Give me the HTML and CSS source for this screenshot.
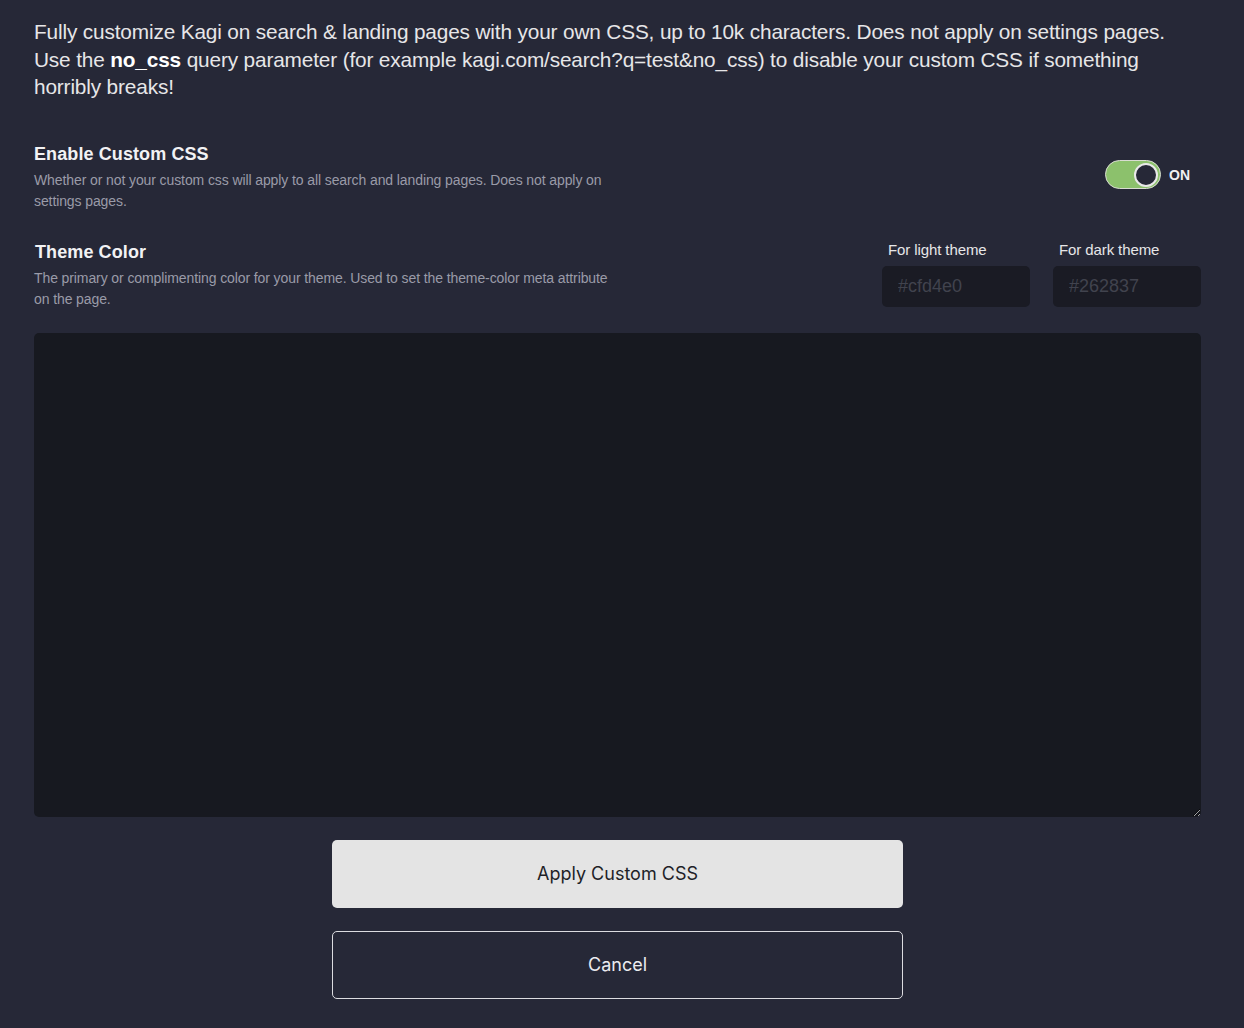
FILE: index.html
```html
<!DOCTYPE html>
<html lang="en">
<head>
    <meta charset="UTF-8">
    <meta name="viewport" content="width=device-width, initial-scale=1.0">
    <title>Custom CSS</title>
    <link rel="stylesheet" href="styles.css">
</head>
<body>
    <main class="page">
        <p class="intro">
            Fully customize Kagi on search &amp; landing pages with your own CSS, up to 10k characters. Does not apply on settings pages.<br>
            Use the <b>no_css</b> query parameter (for example kagi.com/search?q=test&amp;no_css) to disable your custom CSS if something horribly breaks!
        </p>

        <div class="setting">
            <div class="setting-text">
                <h3>Enable Custom CSS</h3>
                <p>Whether or not your custom css will apply to all search and landing pages. Does not apply on settings pages.</p>
            </div>
            <label class="switch">
                <span class="track"><span class="knob"></span></span>
                <span class="switch-label">ON</span>
            </label>
        </div>

        <div class="setting theme">
            <div class="setting-text">
                <h3>Theme Color</h3>
                <p>The primary or complimenting color for your theme. Used to set the theme-color meta attribute on the page.</p>
            </div>
            <div class="colors">
                <label class="color-field">
                    <span>For light theme</span>
                    <input type="text" placeholder="#cfd4e0">
                </label>
                <label class="color-field">
                    <span>For dark theme</span>
                    <input type="text" placeholder="#262837">
                </label>
            </div>
        </div>

        <textarea class="editor"></textarea>

        <div class="actions">
            <button class="btn primary">Apply Custom CSS</button>
            <button class="btn outline">Cancel</button>
        </div>
    </main>
</body>
</html>
```

FILE: styles.css
```css
*, *:before, *:after{
    margin: 0;
    padding: 0;
    box-sizing: border-box;
}
body{
    background: #262837;
    font-family: "Liberation Sans", Arial, sans-serif;
    color: #e8e8ea;
}
.page{
    width: 1167px;
    margin-left: 34px;
    padding-top: 18px;
}
.intro{
    font-size: 20.8px;
    line-height: 27.5px;
    color: #e6e6e8;
    letter-spacing: -0.15px;
}
.intro b{
    color: #fff;
}
.setting{
    display: flex;
    justify-content: space-between;
    margin-top: 42px;
}
.setting-text{
    width: 580px;
}
.setting h3{
    font-size: 18px;
    font-weight: bold;
    color: #f2f2f4;
    line-height: 22px;
    letter-spacing: 0.1px;
}
.setting p{
    font-size: 14px;
    line-height: 21px;
    color: #9a9ba8;
    margin-top: 5px;
    letter-spacing: -0.1px;
}
.switch{
    display: flex;
    align-items: center;
    gap: 8px;
    margin-top: 17px;
    margin-right: 11px;
    height: 30px;
}
.track{
    width: 56px;
    height: 29px;
    border-radius: 15px;
    background: #8cc16c;
    border: 1.5px solid #d9dcd2;
    display: flex;
    align-items: center;
    justify-content: flex-end;
    padding-right: 2px;
}
.knob{
    width: 24px;
    height: 24px;
    border-radius: 50%;
    background: #262837;
    border: 2px solid #e8e8e8;
}
.switch-label{
    font-size: 14px;
    font-weight: bold;
    color: #f0f0f2;
}
.theme{
    margin-top: 29px;
}
.theme h3{
    padding-left: 1px;
}
.colors{
    display: flex;
    gap: 23px;
}
.color-field{
    display: flex;
    flex-direction: column;
    gap: 7px;
}
.color-field span{
    font-size: 15px;
    line-height: 18px;
    color: #e6e6e8;
    padding-left: 6px;
    letter-spacing: -0.1px;
}
.color-field input{
    width: 148px;
    height: 41px;
    background: #1a1b24;
    border: none;
    border-radius: 5px;
    padding: 0 16px;
    font-family: "Liberation Sans", Arial, sans-serif;
    font-size: 18px;
    color: #e6e6e8;
    outline: none;
}
.color-field input::placeholder{
    color: #41434e;
}
.editor{
    display: block;
    width: 100%;
    height: 484px;
    margin-top: 23px;
    background: #171920;
    border: none;
    border-radius: 5px;
    resize: vertical;
    outline: none;
    color: #e6e6e8;
}
.actions{
    display: flex;
    flex-direction: column;
    align-items: center;
    gap: 23px;
    margin-top: 23px;
}
.btn{
    width: 571px;
    height: 68px;
    border-radius: 5px;
    font-family: "Inter", "Lato", sans-serif;
    font-size: 18px;
    cursor: pointer;
}
.primary{
    background: #e4e4e4;
    border: none;
    color: #1e1f28;
}
.outline{
    background: transparent;
    border: 1px solid #dcdce0;
    color: #ececf0;
}
```
